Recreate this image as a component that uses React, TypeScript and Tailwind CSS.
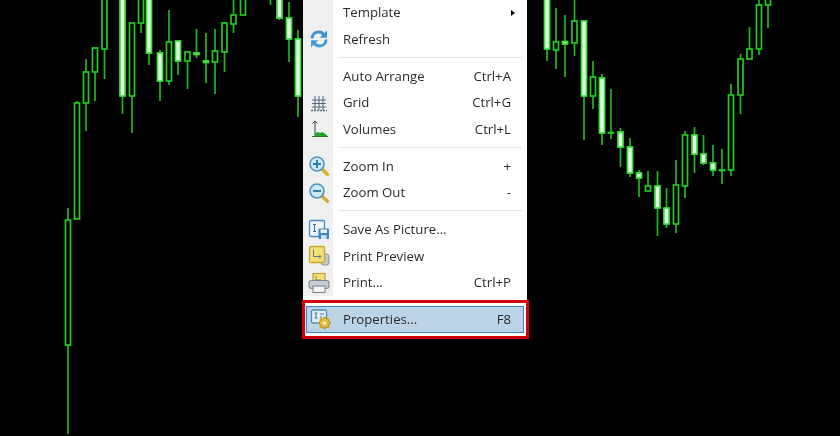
import type { ReactNode } from "react";

// [x, wickTop, bodyTop, bodyBottom, wickBottom, filled]
type Candle = [number, number, number, number, number, boolean];

const candles: Candle[] = [
  [68, 208, 220, 345, 434, false],
  [77, 101, 103, 219, 219, false],
  [86, 59, 72, 103, 131, false],
  [95, 48, 48, 72, 101, false],
  [104.5, -2, -2, 49, 79, false],
  [122.5, -2, -2, 96, 114, true],
  [132, 23, 23, 96, 133, false],
  [141, -2, -2, 23, 33, false],
  [149, -2, -2, 53, 65, true],
  [160, 50, 53, 81, 101, true],
  [169, 10, 42, 81, 85, false],
  [178, 41, 41, 61, 75, true],
  [187.5, 51, 52, 61, 89, false],
  [196.5, 29, 53, 54.5, 58, true],
  [206, 33, 61, 62.5, 83, true],
  [215, 29, 51, 62, 94, false],
  [224.5, 22, 23, 52, 72, false],
  [233.5, -2, 15, 24, 33, false],
  [243, -2, -2, 15, 15, false],
  [270.5, -2, -2, -2, 5, false],
  [279.5, -2, -2, 18, 20, true],
  [289, 2, 18, 39, 62, true],
  [298, 30, 39, 96, 117, true],
  [547, -2, -2, 49, 61, true],
  [556, 8, 42, 50, 69, false],
  [565, 15, 41.5, 44, 77, true],
  [574.5, -2, 21, 43, 56, false],
  [584, 21, 21, 96, 140, true],
  [593, 61, 77, 96, 109, false],
  [602, 74, 78, 133, 145, true],
  [611, 89, 132.5, 133, 139, false],
  [620.5, 128, 132, 147, 167, true],
  [630, 138, 147, 173, 177, true],
  [639, 170, 173, 178, 197, true],
  [648, 171, 186, 191, 191, false],
  [657.5, 171, 186, 208, 236, true],
  [666.5, 188, 208, 224, 228, true],
  [676, 160, 185, 224, 233, false],
  [685, 131, 135, 186, 198, false],
  [694.5, 127, 135, 154, 173, true],
  [703.5, 135, 154, 163, 165, true],
  [713, 145, 163, 170, 176, true],
  [722, 149, 170, 170.5, 184, false],
  [731, 84, 95, 170, 176, false],
  [740.5, 54, 59, 95, 114, false],
  [749.5, 27, 49, 59, 59, false],
  [759, -2, 5, 49, 55, false],
  [768, -2, -2, 5, 28, false],
];

function Chart() {
  return (
    <svg width="840" height="436" className="absolute inset-0 blur-[0.25px]">
      {candles.map(([x, wt, bt, bb, wb, filled]) => (
        <g key={x}>
          <line x1={x} x2={x} y1={wt} y2={wb} stroke="#1fb81f" strokeWidth="1.7" />
          <rect
            x={x - 2.5}
            y={bt}
            width="5"
            height={bb - bt}
            fill={filled ? "#eaffea" : "#000"}
            stroke={filled ? "#38e838" : "#1fcc1f"}
            strokeWidth="1.7"
          />
        </g>
      ))}
    </svg>
  );
}

function Icon({ children }: { children: ReactNode }) {
  return (
    <svg width="22" height="22" viewBox="0 0 22 22" fill="none">
      {children}
    </svg>
  );
}

const RefreshIcon = () => (
  <Icon>
    <path d="M4 10.500C4 6.500 7 4 10.500 4c2.500 0 4.300 1 5.500 2.800" stroke="#3f8fcf" strokeWidth="3" />
    <path d="M19 2.500v7.300h-7.300z" fill="#3f8fcf" />
    <path d="M18 11.500c0 4-3 6.500-6.500 6.500-2.500 0-4.300-1-5.500-2.800" stroke="#4a9ad6" strokeWidth="3" />
    <path d="M3 19.500v-7.300h7.300z" fill="#4a9ad6" />
  </Icon>
);

const GridIcon = () => (
  <Icon>
    <path d="M7 4v14M11 4v14M15 4v14M4 8h14M4 11.500h14M4 15h14" stroke="#4f6880" strokeWidth="1" />
    <path d="M3 18.500h16" stroke="#5a6a7a" strokeWidth="1.500" strokeDasharray="2 1" />
  </Icon>
);

const VolumesIcon = () => (
  <Icon>
    <path d="M7 3v15M4.500 5.500L7 3l2.500 2.500" stroke="#36484a" strokeWidth="1" />
    <path d="M7 15l3-1 2 1 2-1 2 1 3 2v1.500H7z" fill="#23a52f" />
    <path d="M4 18.500h16" stroke="#1f7a2a" strokeWidth="1" />
  </Icon>
);

const ZoomIcon = ({ plus }: { plus?: boolean }) => (
  <Icon>
    <path d="M14 14l5.500 5.500" stroke="#d6b02e" strokeWidth="3.400" strokeLinecap="round" />
    <circle cx="9" cy="9" r="7" fill="#cfe6f5" stroke="#4b94bd" strokeWidth="1.600" />
    <path d={plus ? "M5 9h8M9 5v8" : "M5 9h8"} stroke="#2f7fa8" strokeWidth="2" />
  </Icon>
);

const SaveIcon = () => (
  <Icon>
    <rect x="1.500" y="1.500" width="15" height="16" rx="1.500" fill="#eef5fb" stroke="#4a8cc4" strokeWidth="1.300" />
    <path d="M5 5.500h3M6.500 5.500v7M5 12.500h3" stroke="#3d6d96" strokeWidth="1" />
    <rect x="10.500" y="9.500" width="10.500" height="10.500" rx="1" fill="#3f87c4" />
    <rect x="12.500" y="10.500" width="6.500" height="3.500" fill="#e6f1fa" />
    <rect x="13" y="16" width="5.500" height="4" fill="#cfe2f2" />
  </Icon>
);

const PreviewIcon = () => (
  <Icon>
    <rect x="13" y="9" width="8" height="11" rx="2.500" fill="#c3c9ce" stroke="#8a9299" strokeWidth="1" />
    <rect x="1.500" y="1.500" width="15" height="16" rx="1.500" fill="#f6df74" stroke="#c9a52c" strokeWidth="1.300" />
    <path d="M5.500 4.500v7h7M11 9.500l2 2-2 2" stroke="#4f7a90" strokeWidth="1" />
  </Icon>
);

const PrintIcon = () => (
  <Icon>
    <rect x="5" y="1.500" width="12" height="10" fill="#f6df74" stroke="#b89a3a" strokeWidth="1.100" />
    <path d="M8 4v4h5" stroke="#5f7a70" strokeWidth=".9" />
    <rect x="1" y="8.500" width="20" height="8" rx="2.500" fill="#c6ccd1" stroke="#7f878e" strokeWidth="1.100" />
    <rect x="5" y="14" width="12" height="6.500" fill="#f2f4f5" stroke="#7f878e" strokeWidth="1.100" />
  </Icon>
);

const PropertiesIcon = () => (
  <Icon>
    <rect x="1.500" y="1" width="15" height="13" rx="1.500" fill="#e6f0f8" stroke="#4a8cc4" strokeWidth="1.300" />
    <path d="M4.500 4h3M6 4v5M4.500 9h3M10 5h4M10 8h2" stroke="#3d6d96" strokeWidth="1" />
    <path d="M14.500 7.500v2.500M14.500 18v2.500M8 14h2.500M18.500 14H21M10 9.500l1.800 1.800M17.200 16.700L19 18.500M19 9.500l-1.800 1.800M11.800 16.700L10 18.500" stroke="#d0a62c" strokeWidth="2" />
    <circle cx="14.500" cy="14" r="5" fill="#e6bd3c" stroke="#b18a1e" strokeWidth="1" />
    <circle cx="14.500" cy="14" r="1.800" fill="#fff3c4" />
  </Icon>
);

function Row({
  icon,
  label,
  shortcut,
  arrow,
  active,
}: {
  icon?: ReactNode;
  label: string;
  shortcut?: string;
  arrow?: boolean;
  active?: boolean;
}) {
  if (active) {
    return (
      <div className="mx-[3px] flex h-[27px] items-center border border-[#3d86c6] bg-[#bdd3e6]">
        <div className="flex w-[26px] shrink-0 items-center justify-center pl-[2px]">{icon}</div>
        <div className="flex flex-1 items-center justify-between pl-[10px] pr-[12px]">
          <span>{label}</span>
          <span>{shortcut}</span>
        </div>
      </div>
    );
  }
  return (
    <div className="flex h-[26.5px] items-center">
      <div className="flex h-full w-[30px] shrink-0 items-center justify-center bg-[#f0f0f0] pl-[2px]">{icon}</div>
      <div className="flex h-full flex-1 items-center justify-between pl-[10px] pr-[16px] pt-[1px]">
        <span>{label}</span>
        {shortcut && <span>{shortcut}</span>}
        {arrow && <span className="mr-[-4px] h-0 w-0 border-y-[3.500px] border-l-[4px] border-y-transparent border-l-black" />}
      </div>
    </div>
  );
}

function Separator({ last }: { last?: boolean }) {
  return (
    <div className="flex h-[10.5px]">
      <div className={last ? "w-[30px]" : "w-[30px] bg-[#f0f0f0]"} />
      <div className="ml-[6px] mr-[5px] mt-[4.500px] h-px flex-1 bg-[#e4e4e4]" />
    </div>
  );
}

export default function App() {
  return (
    <div className="relative h-[436px] w-[840px] overflow-hidden bg-black">
      <Chart />

      {/* CONTEXT MENU */}
      <div
        className="absolute left-[303px] top-[-0.75px] h-[337px] w-[224px] bg-white text-[13.2px] text-[#2b2b2b] blur-[0.3px]"
        style={{ fontFamily: '"Open Sans", sans-serif' }}
      >
        <Row label="Template" arrow />
        <Row label="Refresh" icon={<RefreshIcon />} />
        <Separator />
        <Row label="Auto Arrange" shortcut="Ctrl+A" />
        <Row label="Grid" shortcut="Ctrl+G" icon={<GridIcon />} />
        <Row label="Volumes" shortcut="Ctrl+L" icon={<VolumesIcon />} />
        <Separator />
        <Row label="Zoom In" shortcut="+" icon={<ZoomIcon plus />} />
        <Row label="Zoom Out" shortcut="-" icon={<ZoomIcon />} />
        <Separator />
        <Row label="Save As Picture..." icon={<SaveIcon />} />
        <Row label="Print Preview" icon={<PreviewIcon />} />
        <Row label="Print..." shortcut="Ctrl+P" icon={<PrintIcon />} />
        <Separator last />
        <Row label="Properties..." shortcut="F8" icon={<PropertiesIcon />} active />
      </div>

      {/* red annotation box */}
      <div className="absolute left-[302px] top-[300px] h-[39px] w-[227px] border-[3px] border-[#d00010]" />
    </div>
  );
}
